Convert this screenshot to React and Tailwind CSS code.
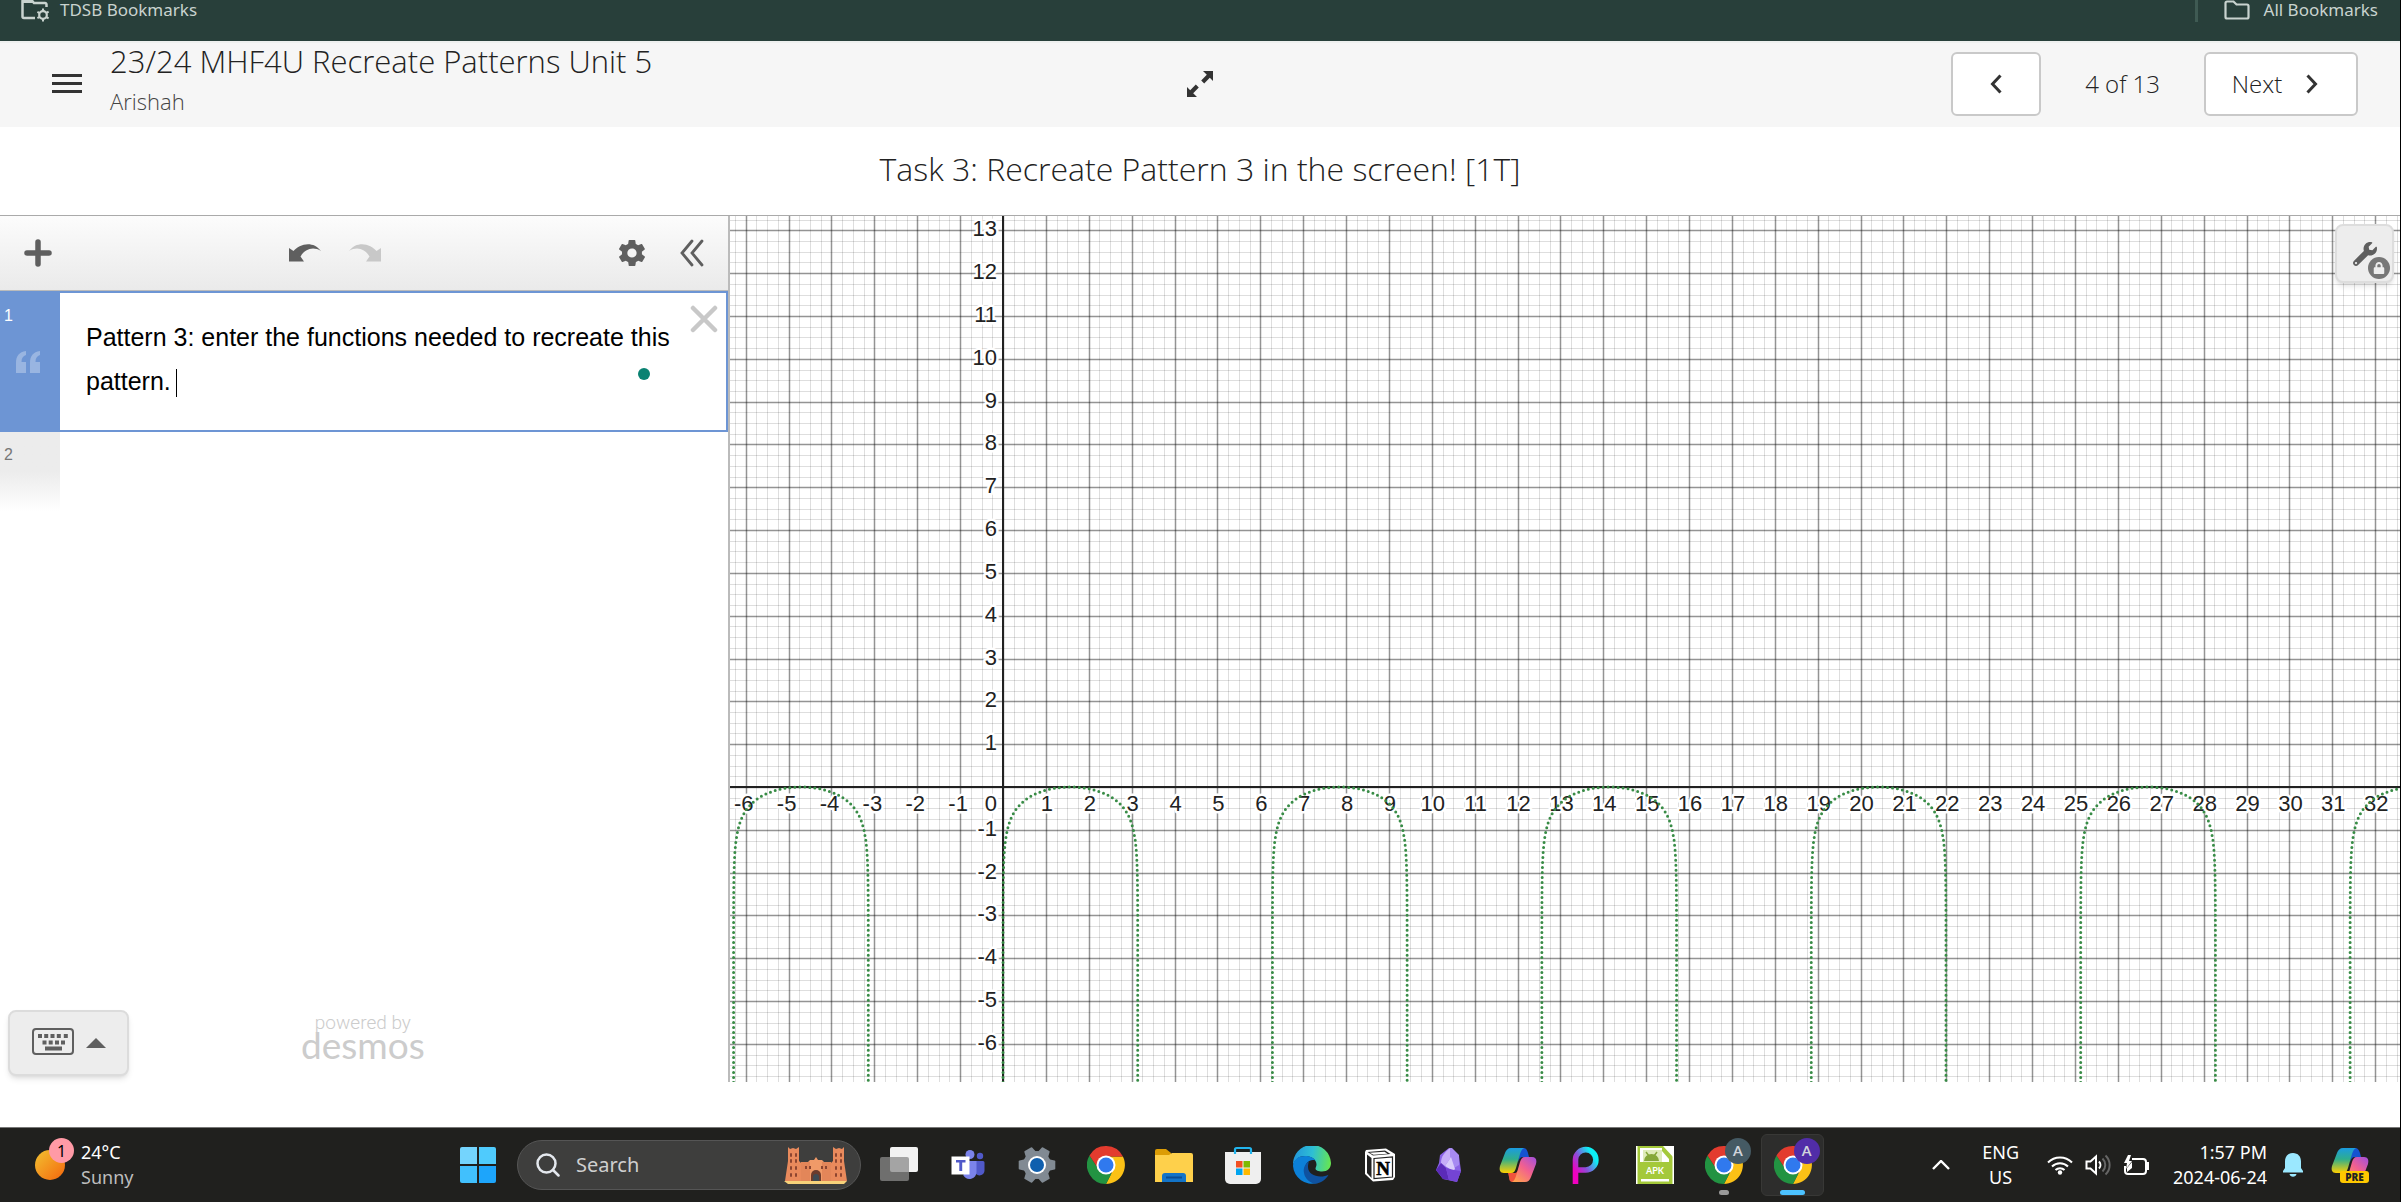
import React, { useEffect, useId, useRef, useState } from "react";
import { FaWrench, FaLock } from "react-icons/fa";
import { IoMdSettings } from "react-icons/io";

const UNIT_X = 42.88;
const UNIT_Y = 42.82;
const ORIGIN = { x: 273, y: 571 };

const px = (x) => ORIGIN.x + x * UNIT_X;
const py = (y) => ORIGIN.y - y * UNIT_Y;
const snap = (n) => Math.round(n) + 0.5;

const range = (from, to) =>
  Array.from({ length: to - from + 1 }, (_, i) => from + i);

// y = log(sin x), one arch for every full period
const archPath = (start) => {
  const half = [];
  for (let y = -9; y < -1; y += 0.25) half.push([Math.asin(10 ** y), y]);
  for (let x = 0.1; x < Math.PI / 2; x += 0.05)
    half.push([x, Math.log10(Math.sin(x))]);
  const mirrored = half.map(([x, y]) => [Math.PI - x, y]).reverse();
  return [...half, ...mirrored]
    .map(
      ([x, y], i) =>
        `${i ? "L" : "M"}${px(start + x).toFixed(2)} ${py(y).toFixed(2)}`
    )
    .join("");
};

function Graph() {
  const ref = useRef(null);
  const [size, setSize] = useState({ width: 1670, height: 866 });

  useEffect(() => {
    const observer = new ResizeObserver(([entry]) => {
      const { width, height } = entry.contentRect;
      setSize({ width, height });
    });
    observer.observe(ref.current);
    return () => observer.disconnect();
  }, []);

  // only label the lines whose whole label fits in the view
  const lastX = Math.floor((size.width - ORIGIN.x - 13) / UNIT_X);
  const firstY = -Math.floor((size.height - ORIGIN.y - 8) / UNIT_Y);
  const xs = range(-6, Math.max(lastX, 1));
  const ys = range(Math.min(firstY, 0), 13);

  return (
    <svg
      ref={ref}
      className="block h-full w-full"
      role="img"
      aria-label="Graph of the pattern"
    >
      {range(-25, (lastX + 2) * 4).map((i) => (
        <line
          key={`mx${i}`}
          x1={snap(px(i / 4))}
          x2={snap(px(i / 4))}
          y1="0"
          y2="100%"
          stroke="#000"
          strokeOpacity={i % 4 ? 0.13 : 0.42}
          strokeWidth={i % 4 ? 1 : 1.5}
        />
      ))}
      {range((firstY - 2) * 4, 53).map((i) => (
        <line
          key={`my${i}`}
          y1={snap(py(i / 4))}
          y2={snap(py(i / 4))}
          x1="0"
          x2="100%"
          stroke="#000"
          strokeOpacity={i % 4 ? 0.13 : 0.42}
          strokeWidth={i % 4 ? 1 : 1.5}
        />
      ))}
      <line x1={px(0)} x2={px(0)} y1="0" y2="100%" stroke="#222" strokeWidth="2" />
      <line y1={py(0)} y2={py(0)} x1="0" x2="100%" stroke="#222" strokeWidth="2" />

      <g
        fontFamily="'Liberation Sans', Arial, sans-serif"
        fontSize="22"
        fill="#222"
        stroke="#fff"
        strokeWidth="5"
        strokeLinejoin="round"
        paintOrder="stroke"
      >
        {xs
          .filter((x) => x !== 0)
          .map((x) => (
            <text
              key={x}
              x={px(x) - (x < 0 ? 2 : -1)}
              y={ORIGIN.y + 24}
              textAnchor="middle"
            >
              {x}
            </text>
          ))}
        {ys.map((y) => (
          <text
            key={y}
            x={ORIGIN.x - 6}
            y={y === 0 ? ORIGIN.y + 24 : py(y) + 6}
            textAnchor="end"
          >
            {y}
          </text>
        ))}
      </g>

      <g
        fill="none"
        stroke="#388c46"
        strokeWidth="3"
        strokeLinecap="round"
        strokeDasharray="0 5"
      >
        {range(-1, Math.ceil(lastX / 6)).map((k) => (
          <path key={k} d={archPath(2 * Math.PI * k)} />
        ))}
      </g>
    </svg>
  );
}

function ChromeIcon() {
  return (
    <svg viewBox="0 0 38 38" className="h-[38px] w-[38px]">
      <path d="M19 10.500H35.900A19 19 0 0 1 19 38l7.400-14.700Z" fill="#fbc116" />
      <path d="M2.500 9.500 11.600 23.200 19 27.500h5.500L19 38A19 19 0 0 1 2.500 9.500Z" fill="#229342" />
      <path d="M19 10.500h16.900A19 19 0 0 0 2.500 9.500l9.100 13.700Z" fill="#e33b2e" />
      <circle cx="19" cy="19" r="9.500" fill="#fff" />
      <circle cx="19" cy="19" r="7.500" fill="#3079ee" />
    </svg>
  );
}

function CopilotIcon({ pre }) {
  const id = useId();
  return (
    <svg viewBox="0 0 38 38" className="h-[38px] w-[38px]">
      <defs>
        <linearGradient id={`${id}a`} x1="0" y1="0" x2="0" y2="1">
          <stop offset="0" stopColor="#1b9be0" />
          <stop offset=".45" stopColor="#2fae8c" />
          <stop offset="1" stopColor="#ffd000" />
        </linearGradient>
        <linearGradient id={`${id}b`} x1="1" y1="0" x2=".2" y2="1">
          <stop offset="0" stopColor="#a04fe0" />
          <stop offset=".5" stopColor="#f2608f" />
          <stop offset="1" stopColor="#ffa050" />
        </linearGradient>
      </defs>
      <path d="M20 2h4c3 0 4 2 5 5l1 4h-6c-3 0-4 2-5 5z" fill="#1553d0" />
      <path d="M18 36h-4c-3 0-4-2-4-5l-1-4h6c3 0 4-2 5-6z" fill="#f0533c" />
      <path
        d="M12 2h13c-2 1-3 3-4 6l-4 14c-1 3-2 5-5 5H5c-4 0-5-3-4-7L6 7c1-3 3-5 6-5Z"
        fill={`url(#${id}a)`}
      />
      <path
        d="M26 36H13c2-1 3-3 4-6l4-14c1-3 2-5 5-5h7c4 0 5 3 4 7l-5 13c-1 3-3 5-6 5Z"
        fill={`url(#${id}b)`}
      />
      {pre && (
        <g>
          <rect x="9" y="25" width="29" height="12" rx="3" fill="#ffc800" />
          <text
            x="23.500"
            y="34.500"
            textAnchor="middle"
            fontFamily="'Open Sans', sans-serif"
            fontWeight="800"
            fontSize="10"
            fill="#222"
          >
            PRE
          </text>
        </g>
      )}
    </svg>
  );
}

function TaskViewIcon() {
  return (
    <svg viewBox="0 0 38 38" className="h-[38px] w-[38px]">
      <rect x="10" y="1" width="28" height="25" rx="2" fill="#f2f2f2" />
      <rect x="0" y="11" width="29" height="24" rx="2" fill="#8a8a8a" fillOpacity=".75" />
    </svg>
  );
}

function TeamsIcon() {
  return (
    <svg viewBox="0 0 38 38" className="h-[38px] w-[38px]">
      <circle cx="21" cy="8.500" r="4.500" fill="#7b83eb" />
      <circle cx="31" cy="10" r="3.200" fill="#5059c9" />
      <path d="M27 15h7a1.500 1.500 0 0 1 1.500 1.500v8a5 5 0 0 1-8.500 3.500z" fill="#5059c9" />
      <path d="M15 15h12.500v11a7 7 0 0 1-13 3.500z" fill="#7b83eb" />
      <rect x="2.500" y="10.500" width="18" height="18" fill="#fff" />
      <path d="M7 14h9.500v2.500h-3.300V25h-2.900v-8.500H7z" fill="#5059c9" />
    </svg>
  );
}

function SettingsIcon() {
  return (
    <svg viewBox="0 0 38 38" className="h-[38px] w-[38px]">
      <g fill="#818a93">
        <circle cx="19" cy="19" r="14" />
        {range(0, 5).map((i) => (
          <path
            key={i}
            d="M13 8 14.500 1.500q.2-.8 1-.8h7q.8 0 1 .8L25 8z"
            transform={`rotate(${i * 60 + 30} 19 19)`}
          />
        ))}
      </g>
      <circle cx="19" cy="19" r="9" fill="#fff" />
      <circle cx="19" cy="19" r="7" fill="#0f5fae" />
    </svg>
  );
}

function ExplorerIcon() {
  return (
    <svg viewBox="0 0 38 38" className="h-[38px] w-[38px]">
      <path d="M0 5a2 2 0 0 1 2-2h9l5 4v4H0z" fill="#dc9c05" />
      <path d="M0 9h14l3-2h19a2 2 0 0 1 2 2v27H0z" fill="#fed04b" />
      <path d="M7 36v-6a3 3 0 0 1 3-3h18a3 3 0 0 1 3 3v6z" fill="#1374c8" />
      <path d="M11 31.500h16" stroke="#0a4d94" strokeWidth="2" />
    </svg>
  );
}

function StoreIcon() {
  return (
    <svg viewBox="0 0 38 38" className="h-[38px] w-[38px]">
      <path d="M1 6h36v27a5 5 0 0 1-5 5H6a5 5 0 0 1-5-5z" fill="#efefef" />
      <path d="M11 8V3.500a1.500 1.500 0 0 1 1.500-1.500h13A1.500 1.500 0 0 1 27 3.500V8" fill="none" stroke="#22b5ee" strokeWidth="2.200" />
      <path d="M12 15h6.500v6.500H12z" fill="#f25022" />
      <path d="M19.500 15H26v6.500h-6.500z" fill="#7fba00" />
      <path d="M12 22.500h6.500V29H12z" fill="#00a4ef" />
      <path d="M19.500 22.500H26V29h-6.500z" fill="#ffb900" />
    </svg>
  );
}

function EdgeIcon() {
  const id = useId();
  return (
    <svg viewBox="0 0 38 38" className="h-[38px] w-[38px]">
      <defs>
        <linearGradient id={`${id}e`} x1="0" y1=".4" x2="1" y2=".5">
          <stop offset="0" stopColor="#2196dc" />
          <stop offset=".5" stopColor="#2ebfd4" />
          <stop offset="1" stopColor="#66e552" />
        </linearGradient>
      </defs>
      <path d="M0 19A19 19 0 0 1 38 17c0 5-3.500 8.500-9 8.500-3.500 0-6.500-1-6.500-3 0-1.300 1-1.800 1-4C23.500 14 19 10 12 10 5 10 1 15 0 19Z" fill={`url(#${id}e)`} />
      <path d="M0 20c0-5 4-10 12-10 5 0 9 2 10.500 4.500C17 12.500 12 17 12 23c0 8 6 13 12 14A19 19 0 0 1 0 20Z" fill="#0c80d8" />
      <path d="M16 15c-4 3-6 7-5 12 1 6 6 10 11 10.700 6-.7 10.500-3.700 13.500-9-2 1-5 1.800-8 1.800-6.500 0-12.500-3.500-12.500-9.500 0-2.500.500-4.500 1-6Z" fill="#0f52a0" />
    </svg>
  );
}

function NotionIcon() {
  return (
    <svg viewBox="0 0 38 38" className="h-[38px] w-[38px]">
      <path d="m5 4 20-1.500L34 8v23l-2 3-20 1.500L4 28V6z" fill="#fff" />
      <path d="m6.500 6 17.500-1.500 5.500 3.500L12 9.500z" fill="#222" />
      <path d="m8.500 6.800 15-1.100 3 2-14 1z" fill="#fff" />
      <path d="M6 8.500 10.500 12v20L6 27z" fill="#222" />
      <path d="M13 12.500 31.500 11v20L13 32.500z" fill="#fff" stroke="#222" strokeWidth="1.200" />
      <text x="22" y="28.500" textAnchor="middle" fontFamily="'Liberation Serif', serif" fontWeight="700" fontSize="19" fill="#000" stroke="#000" strokeWidth=".6">
        N
      </text>
    </svg>
  );
}

function ObsidianIcon() {
  return (
    <svg viewBox="0 0 38 38" className="h-[38px] w-[38px]">
      <path d="M19 2 10 9 9 17 6 24l7 9 14 3 4-11-2-15-7-7z" fill="#8a63e6" />
      <path d="M20 2c-5 4-9 8-9 15l4 3 6-9z" fill="#c6adf8" />
      <path d="M20 2v9l4 11 5-3V9l-7-7z" fill="#a78af2" />
      <path d="m15 20 6-9 4 12-2 2z" fill="#d9cbfb" />
      <path d="m6 24 5-7 5 5 3 12-6-1z" fill="#5b2bb8" />
      <path d="m16 22 8 2 7 1-4 11-8-2z" fill="#7444d4" />
    </svg>
  );
}

function PicsartIcon() {
  const id = useId();
  return (
    <svg viewBox="0 0 38 38" className="h-[38px] w-[38px]">
      <defs>
        <linearGradient id={`${id}p`} x1="1" y1="0" x2="0" y2="1">
          <stop offset=".15" stopColor="#0cf0f4" />
          <stop offset=".5" stopColor="#8a4fd8" />
          <stop offset=".8" stopColor="#f000c0" />
        </linearGradient>
      </defs>
      <path d="M7.500 38V13.500a10.200 10.200 0 1 1 10.200 10.500H6" fill="none" stroke={`url(#${id}p)`} strokeWidth="5.600" />
    </svg>
  );
}

function ApkIcon() {
  return (
    <svg viewBox="0 0 38 38" className="h-[38px] w-[38px]">
      <rect width="38" height="38" fill="#a4c93a" />
      <path d="M4 2h22v3l7 8v3H4z" fill="#fff" />
      <path d="M7 4h19v12H7z" fill="#a4c93a" fillOpacity=".35" />
      <path d="M27 0h11v12z" fill="#fff" />
      <path d="M8 15a7.500 7 0 0 1 15 0z" fill="#86a83a" />
      <path d="m10 6 3 4M21 6l-3 4" stroke="#86a83a" strokeWidth="1.500" />
      <path d="M5 33h28v2.500H5z" fill="#fff" />
      <path d="M0 0h1.500v38H0zM36.500 0H38v38h-1.500z" fill="#fff" />
      <text x="19" y="28" textAnchor="middle" fontFamily="Lato, sans-serif" fontWeight="700" fontSize="9" fill="#fff">
        APK
      </text>
    </svg>
  );
}

function FortIcon() {
  return (
    <svg viewBox="0 0 64 38" className="h-[38px] w-16 shrink-0">
      <path d="M0 35h63l-3 3H4z" fill="#f7d27a" />
      <path d="m4 1 2 2 3-1 3 1 3-2v14l2 2v18H1l3-20zM49 1l3 2 3-1 3 1 2-2v14l3 20H47V17l2-2z" fill="#e98a5c" />
      <path d="M17 16h7l2-2h4l2-3 2 3h4l2 2h7v19H17z" fill="#f09a68" />
      <path d="M17 16h9v19h-9zM38 16h9v19h-9z" fill="#d9764c" fillOpacity=".55" />
      <path d="M27 35v-6a5 5 0 0 1 10 0v6z" fill="#6b3b2c" />
      <path d="M29 35v-4a3 3 0 0 1 6 0v4z" fill="#3f4a52" />
      <g fill="#8c4530">
        {[6, 11, 51, 56].map((x) =>
          [7, 13, 20, 27].map((y) => (
            <rect key={`${x}-${y}`} x={x} y={y} width="2" height="4" rx="1" />
          ))
        )}
        {[21, 25, 37, 41].map((x) => (
          <rect key={x} x={x} y="20" width="2" height="3" />
        ))}
      </g>
    </svg>
  );
}

function ProfileChrome({ color }) {
  return (
    <span className="relative">
      <ChromeIcon />
      <span
        className={`absolute -top-2 -right-2 flex h-[26px] w-[26px] items-center justify-center rounded-full font-['Lato',sans-serif] text-sm font-bold text-gray-300 ${color}`}
      >
        A
      </span>
    </span>
  );
}

const apps = [
  { name: "Task view", icon: <TaskViewIcon /> },
  { name: "Teams", icon: <TeamsIcon /> },
  { name: "Settings", icon: <SettingsIcon /> },
  { name: "Chrome", icon: <ChromeIcon /> },
  { name: "File Explorer", icon: <ExplorerIcon /> },
  { name: "Store", icon: <StoreIcon /> },
  { name: "Edge", icon: <EdgeIcon /> },
  { name: "Notion", icon: <NotionIcon /> },
  { name: "Obsidian", icon: <ObsidianIcon /> },
  { name: "Copilot", icon: <CopilotIcon /> },
  { name: "Picsart", icon: <PicsartIcon /> },
  { name: "APK", icon: <ApkIcon /> },
  { name: "Chrome profile", icon: <ProfileChrome color="bg-[#455a64]" />, open: true },
  { name: "Chrome profile, active", icon: <ProfileChrome color="bg-[#512da8]" />, active: true },
];

function BookmarksBar() {
  return (
    <nav className="flex h-[43px] items-start justify-between border-b-2 border-[#eef0ef] bg-[#283f3a] font-['Noto_Sans',sans-serif] text-[17px] text-[#c9d3cf]">
      <a href="#tdsb" className="flex h-5 items-center gap-[10px] pl-5">
        <svg viewBox="0 0 30 24" className="h-6 w-[30px]" fill="none" stroke="currentColor" strokeWidth="2.500">
          <path d="M15 20H4a1.500 1.500 0 0 1-1.500-1.500V3A1.500 1.500 0 0 1 4 1.500h7l3 3.500h11A1.500 1.500 0 0 1 26.500 6.500V9" />
          <path d="M3 1.500h8l3 3.500H3z" fill="currentColor" stroke="none" />
          <circle cx="23" cy="17" r="3.800" strokeWidth="2.200" />
          <path d="M23 10.500v3M23 20.500v3M17.400 13.800l2.600 1.500M26 18.800l2.600 1.500M17.400 20.200l2.600-1.500M26 15.200l2.600-1.500" strokeWidth="2" />
        </svg>
        TDSB Bookmarks
      </a>
      <a href="#all" className="flex h-5 items-center gap-[14px] pr-[22px]">
        <span className="mr-3 h-6 w-[3px] bg-[#3f5a53]" />
        <svg viewBox="0 0 26 20" className="h-5 w-[26px]" fill="none" stroke="currentColor" strokeWidth="2.200">
          <path d="M1.500 3A1.500 1.500 0 0 1 3 1.500h6.500l3 3H23A1.500 1.500 0 0 1 24.500 6v11A1.500 1.500 0 0 1 23 18.500H3A1.500 1.500 0 0 1 1.500 17z" />
        </svg>
        All Bookmarks
      </a>
    </nav>
  );
}

function Header() {
  return (
    <header className="grid h-[84px] grid-cols-3 items-center bg-[#f6f6f6] pb-[3px] text-[#222]">
      <div className="flex items-center self-start pl-[52px]">
        <button aria-label="Menu" className="mr-7 flex flex-col gap-[5px]">
          <span className="h-[3px] w-[30px] bg-[#333]" />
          <span className="h-[3px] w-[30px] bg-[#333]" />
          <span className="h-[3px] w-[30px] bg-[#333]" />
        </button>
        <div className="font-light">
          <h1 className="text-[31px] leading-9">23/24 MHF4U Recreate Patterns Unit 5</h1>
          <p className="text-[22px] leading-[44px] text-[#444]">Arishah</p>
        </div>
      </div>
      <button aria-label="Full screen" className="justify-self-center">
        <svg viewBox="0 0 28 28" className="h-7 w-7" fill="#333">
          <path d="M17 1h10v10l-3.200-3.200-5.600 5.600-3-3 5.600-5.600z" />
          <path d="M11 27H1V17l3.200 3.200 5.600-5.600 3 3-5.600 5.600z" />
        </svg>
      </button>
      <div className="flex items-center justify-end gap-11 pr-[42px] text-2xl font-light">
        <button aria-label="Previous" className="flex h-16 w-[90px] items-center justify-center rounded-md border-2 border-[#c9c9c9] bg-white">
          <svg viewBox="0 0 12 20" className="h-5 w-3" fill="none" stroke="#333" strokeWidth="3">
            <path d="M10.500 1.500 2.500 10l8 8.500" />
          </svg>
        </button>
        <span>4 of 13</span>
        <button className="flex h-16 w-[154px] items-center justify-center gap-6 rounded-md border-2 border-[#c9c9c9] bg-white pr-3">
          Next
          <svg viewBox="0 0 12 20" className="h-5 w-3" fill="none" stroke="#333" strokeWidth="3">
            <path d="m1.500 1.500 8 8.500-8 8.500" />
          </svg>
        </button>
      </div>
    </header>
  );
}

function ExpressionPanel() {
  const [note, setNote] = useState(
    "Pattern 3: enter the functions needed to recreate this pattern. "
  );
  return (
    <section className="flex w-[730px] shrink-0 flex-col border-r-2 border-[#bbb] font-['Liberation_Sans',Arial,sans-serif]">
      <div className="flex h-[75px] items-center border-b border-[#bbb] bg-linear-to-b from-[#fcfcfc] to-[#eaeaea] pr-6 pl-6 text-[#5f5f5f]">
        <button aria-label="Add item">
          <svg viewBox="0 0 28 28" className="h-7 w-7" stroke="currentColor" strokeWidth="5.500" strokeLinecap="round">
            <path d="M14 3v22M3 14h22" />
          </svg>
        </button>
        <div className="ml-auto flex gap-7">
          <button aria-label="Undo">
            <svg viewBox="0 0 32 20" className="h-5 w-8" fill="currentColor">
              <path d="M0 5 4.500 8C10 1 24-3 32 8 24 3 16 6 11.500 13.500L15 18.500H0z" />
            </svg>
          </button>
          <button aria-label="Redo" className="text-[#c8c8c8]">
            <svg viewBox="0 0 32 20" className="h-5 w-8" fill="currentColor">
              <path d="M32 5 27.500 8C22 1 8-3 0 8 8 3 16 6 20.500 13.500L17 18.500H32z" />
            </svg>
          </button>
        </div>
        <div className="ml-[235px] flex items-center gap-8">
          <button aria-label="Graph settings">
            <IoMdSettings className="h-8 w-8" />
          </button>
          <button aria-label="Hide list">
            <svg viewBox="0 0 24 28" className="h-7 w-6" fill="none" stroke="currentColor" strokeWidth="2.800" strokeLinecap="round">
              <path d="M12 2 2 14l10 12M22 2 12 14l10 12" />
            </svg>
          </button>
        </div>
      </div>

      <div className="relative flex h-[141px] border-2 border-l-0 border-[#6d95d4]">
        <div className="flex w-[60px] flex-col bg-[#6d95d4] pt-3 pl-1 text-white">
          <span className="text-base leading-[22px]">1</span>
          <svg viewBox="0 0 24 22" className="mt-6 ml-3 h-[22px] w-6" fill="#fff" fillOpacity=".3">
            <path d="M0 22V12C0 5 3 1 10 0v4C7 5 5.500 7 5.500 11H10v11zM14 22V12c0-7 3-11 10-12v4c-3 1-4.500 3-4.500 7H24v11z" />
          </svg>
        </div>
        <textarea
          aria-label="Note"
          value={note}
          onChange={(e) => setNote(e.target.value)}
          className="flex-1 resize-none overflow-hidden pt-[22px] pr-10 pl-[26px] text-[25px] leading-[44px] text-black outline-none"
        />
        <span className="absolute top-[76px] left-[176px] h-7 w-px bg-black" />
        <span className="absolute top-[75px] right-[76px] h-3 w-3 rounded-full bg-[#0a8272]" />
        <button aria-label="Delete note" className="absolute top-3 right-2">
          <svg viewBox="0 0 28 28" className="h-7 w-7" stroke="#c8c8c8" strokeWidth="4.500" strokeLinecap="round">
            <path d="m3 3 22 22M25 3 3 25" />
          </svg>
        </button>
      </div>
      <div className="flex h-20 w-[60px] bg-linear-to-b from-[#ececec] from-50% to-white pt-3 pl-1 text-base leading-[22px] text-[#777]">
        2
      </div>

      <div className="mt-auto flex items-center pb-[6px] pl-2">
        <button aria-label="Show keypad" className="flex h-[66px] w-[121px] items-center gap-3 rounded-lg border-2 border-[#dcdcdc] bg-[#ededed] pb-1 pl-[22px] shadow-md">
          <svg viewBox="0 0 42 27" className="h-[27px] w-[42px]" fill="#5f5f5f">
            <rect x="1" y="1" width="40" height="25" rx="3" fill="none" stroke="#5f5f5f" strokeWidth="2" />
            {[6, 12.2, 18.5, 24.8, 31.8].map((x) => (
              <rect key={x} x={x} y="6" width="4" height="4" />
            ))}
            {[10.5, 16.7, 23, 29].map((x) => (
              <rect key={x} x={x} y="12.500" width="4" height="4" />
            ))}
            <rect x="13" y="18.500" width="17" height="4" />
          </svg>
          <svg viewBox="0 0 20 10" className="mt-1 h-[10px] w-5" fill="#5f5f5f">
            <path d="M10 0 20 10H0z" />
          </svg>
        </button>
        <div className="ml-[172px] flex flex-col items-center pb-4 text-[#ccc]">
          <span className="font-['Roboto',sans-serif] text-[19px] leading-5 font-light">powered by</span>
          <span className="font-['Lato',sans-serif] text-[37px] leading-6">desmos</span>
        </div>
      </div>
    </section>
  );
}

function Taskbar() {
  return (
    <footer className="flex h-[75px] items-center border-t border-[#777] bg-[#20201e] font-['Noto_Sans',sans-serif] text-lg leading-[25px] text-white">
      <div className="flex w-[443px] items-center gap-4 pl-[35px]">
        <span className="relative h-[30px] w-[30px] rounded-full bg-linear-to-br from-[#f0c030] to-[#f2640a]">
          <span className="absolute -top-3 left-[14px] flex h-[25px] w-[25px] items-center justify-center rounded-full bg-[#ff9aa6] text-base text-black">
            1
          </span>
        </span>
        <p>
          24°C
          <br />
          <span className="text-[#bdbdbd]">Sunny</span>
        </p>
      </div>
      <button aria-label="Start" className="mr-1 flex w-[70px] justify-center">
        <span className="grid grid-cols-2 gap-[2px]">
          <span className="h-[17px] w-[17px] rounded-tl-xs bg-[#74d4fd]" />
          <span className="h-[17px] w-[17px] rounded-tr-xs bg-[#4fcbfd]" />
          <span className="h-[17px] w-[17px] rounded-bl-xs bg-[#41c0fd]" />
          <span className="h-[17px] w-[17px] rounded-br-xs bg-[#1da5fb]" />
        </span>
      </button>
      <label className="flex h-[50px] w-[344px] items-center gap-4 rounded-full border border-[#555] bg-[#3e3e3d] pr-3 pl-[18px]">
        <svg viewBox="0 0 24 24" className="h-6 w-6 shrink-0" fill="none" stroke="#e4e8ee" strokeWidth="2.500" strokeLinecap="round">
          <circle cx="10.500" cy="10.500" r="9" />
          <path d="m17 17 5.500 5.500" />
        </svg>
        <input
          type="text"
          aria-label="Search"
          placeholder="Search"
          className="w-full min-w-0 bg-transparent text-xl outline-none placeholder:text-[#cfcfcf]"
        />
        <FortIcon />
      </label>
      <div className="ml-1 flex h-[62px] w-[962px] shrink-0">
        {apps.map((app) => (
          <div key={app.name} className="flex-1 px-[3px]">
            <button
              aria-label={app.name}
              className={`relative flex h-full w-full items-center justify-center rounded-md ${
                app.active ? "border border-[#383836] bg-[#2d2d2c]" : ""
              }`}
            >
              {app.icon}
              {app.open && (
                <span className="absolute bottom-px h-[5px] w-[10px] rounded-full bg-[#9a9a9a]" />
              )}
              {app.active && (
                <span className="absolute bottom-0 h-[5px] w-[25px] rounded-full bg-[#4cc2ff]" />
              )}
            </button>
          </div>
        ))}
      </div>
      <div className="ml-auto flex shrink-0 items-center pr-[31px]">
        <button aria-label="Hidden icons" className="mr-8">
          <svg viewBox="0 0 18 10" className="h-[10px] w-[18px]" fill="none" stroke="#fff" strokeWidth="2.400">
            <path d="m1 9 8-8 8 8" />
          </svg>
        </button>
        <p className="mr-7 text-center">
          ENG
          <br />
          US
        </p>
        <svg viewBox="0 0 26 20" className="mr-3 h-5 w-[26px]" fill="none" stroke="#fff" strokeWidth="2">
          <path d="M1 7.500a17 17 0 0 1 24 0M5 11.500a11.500 11.500 0 0 1 16 0M8.500 15a6.500 6.500 0 0 1 9 0" />
          <circle cx="13" cy="17.500" r="2.200" fill="#fff" stroke="none" />
        </svg>
        <svg viewBox="0 0 26 22" className="mr-3 h-[22px] w-[26px]" fill="none" stroke="#fff" strokeWidth="2">
          <path d="M1.500 7.500h4L11 2.500v17l-5.500-5h-4z" />
          <path d="M14 7.500a5 5 0 0 1 0 7" />
          <path d="M17.500 4.500a9 9 0 0 1 0 13M20.500 1.500a13 13 0 0 1 0 19" stroke="#666" />
        </svg>
        <svg viewBox="0 0 26 22" className="mr-6 h-[22px] w-[26px]" fill="none" stroke="#fff" strokeWidth="2">
          <path d="M9 5h11a3 3 0 0 1 3 3v9a3 3 0 0 1-3 3H5a3 3 0 0 1-3-3v-5" />
          <path d="M5 1 1 9h3l-1 6 6-8H6l2-6z" fill="#fff" stroke="none" />
          <path d="M4 18v-4l5-6v6z" fill="#fff" stroke="none" />
          <path d="M23.500 9v6H25V9z" fill="#fff" />
        </svg>
        <p className="mr-4 text-right">
          1:57 PM
          <br />
          2024-06-24
        </p>
        <svg viewBox="0 0 20 24" className="mr-7 h-6 w-5" fill="#9be8ff">
          <path d="M10 0c5 0 8 3.500 8 8.500V15l2 3v1.500H0V18l2-3V8.500C2 3.500 5 0 10 0ZM6.500 21h7a3.600 3.600 0 0 1-7 0Z" />
        </svg>
        <button aria-label="Copilot preview">
          <CopilotIcon pre />
        </button>
      </div>
    </footer>
  );
}

export default function App() {
  return (
    <div className="flex min-h-screen flex-col border-r border-black bg-white font-['Open_Sans',sans-serif]">
      <BookmarksBar />
      <Header />
      <h2 className="flex h-[88px] items-center justify-center pb-1 text-[32px] font-light text-[#222]">
        Task 3: Recreate Pattern 3 in the screen! [1T]
      </h2>
      <main className="mb-[45px] flex flex-1 border-t border-[#aaa]">
        <ExpressionPanel />
        <section className="relative min-w-0 flex-1">
          <div className="absolute inset-0 overflow-hidden">
            <Graph />
          </div>
          <button
            aria-label="Locked settings"
            className="absolute top-2 right-[6px] flex h-[59px] w-[59px] items-center justify-center rounded-lg border-2 border-[#ddd] bg-[#ededed] text-[#5f5f5f] shadow-md"
          >
            <FaWrench className="h-6 w-6" />
            <span className="absolute right-[2px] bottom-[2px] flex h-[22px] w-[22px] items-center justify-center rounded-full bg-[#777] text-[#ededed]">
              <FaLock className="h-3 w-3" />
            </span>
          </button>
        </section>
      </main>
      <Taskbar />
    </div>
  );
}
